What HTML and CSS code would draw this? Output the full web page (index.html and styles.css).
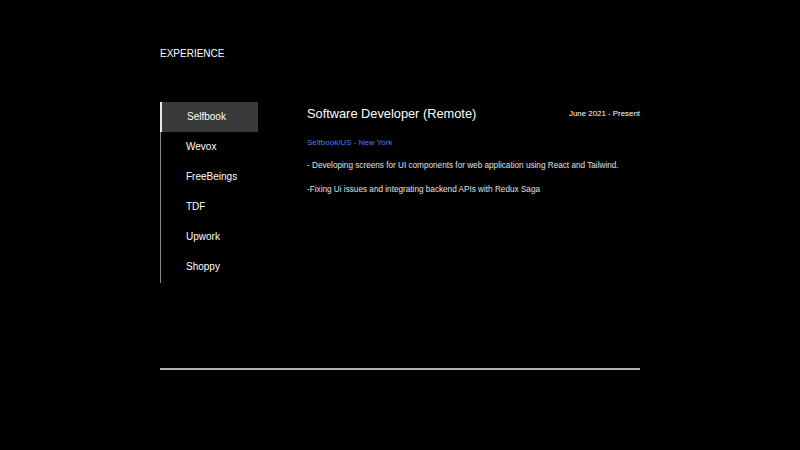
FILE: index.html
```html
<!DOCTYPE html>
<html lang="en">
<head>
<meta charset="utf-8">
<title>Experience</title>
<link rel="stylesheet" href="styles.css">
</head>
<body>
<section class="experience">
  <h2 class="section-title">EXPERIENCE</h2>
  <div class="exp-body">
    <ul class="tabs">
      <li class="tab active">Selfbook</li>
      <li class="tab">Wevox</li>
      <li class="tab">FreeBeings</li>
      <li class="tab">TDF</li>
      <li class="tab">Upwork</li>
      <li class="tab">Shoppy</li>
    </ul>
    <div class="job">
      <div class="job-head">
        <h3 class="job-title">Software Developer (Remote)</h3>
        <span class="job-date">June 2021 - Present</span>
      </div>
      <p class="job-place">Selfbook/US - New York</p>
      <p class="job-point">- Developing screens for UI components for web application using React and Tailwind.</p>
      <p class="job-point">-Fixing Ui issues and integrating backend APIs with Redux Saga</p>
    </div>
  </div>
  <hr class="divider">
</section>
</body>
</html>
```

FILE: styles.css
```css
html, body {
  margin: 0;
  padding: 0;
  background: #000;
  color: #fff;
  font-family: "Liberation Sans", Arial, sans-serif;
}
.experience {
  width: 480px;
  margin: 0 auto;
  padding-top: 48px;
}
.section-title {
  margin: 0;
  font-size: 10px;
  font-weight: 400;
  line-height: 12px;
  color: #fff;
}
.exp-body {
  display: flex;
  margin-top: 42px;
  height: 181px;
}
.tabs {
  list-style: none;
  margin: 0;
  padding: 0;
  width: 97px;
  border-left: 1px solid #8a8a8a;
  flex-shrink: 0;
}
.tab {
  height: 30px;
  line-height: 30px;
  padding-left: 25px;
  font-size: 10px;
  color: #fff;
}
.tab.active {
  background: #3a3a3a;
  border-left: 2px solid #e8e8e8;
  margin-left: -1px;
}
.job {
  flex: 1;
  padding-left: 49px;
}
.job-head {
  display: flex;
  justify-content: space-between;
  align-items: center;
  height: 22px;
}
.job-title {
  margin: 0;
  font-size: 12.8px;
  font-weight: 400;
  color: #fff;
}
.job-date {
  font-size: 7.9px;
  color: #fff;
}
.job-place {
  margin: 14px 0 0;
  font-size: 8px;
  line-height: 10px;
  color: #4d7fe0;
}
.job-point {
  margin: 14px 0 0;
  font-size: 8.2px;
  line-height: 10px;
  color: #e0e0e0;
}
.job-place + .job-point {
  margin-top: 13px;
}
.divider {
  margin: 85px 0 0;
  border: 0;
  height: 2px;
  background: #b0b0b0;
}
```
